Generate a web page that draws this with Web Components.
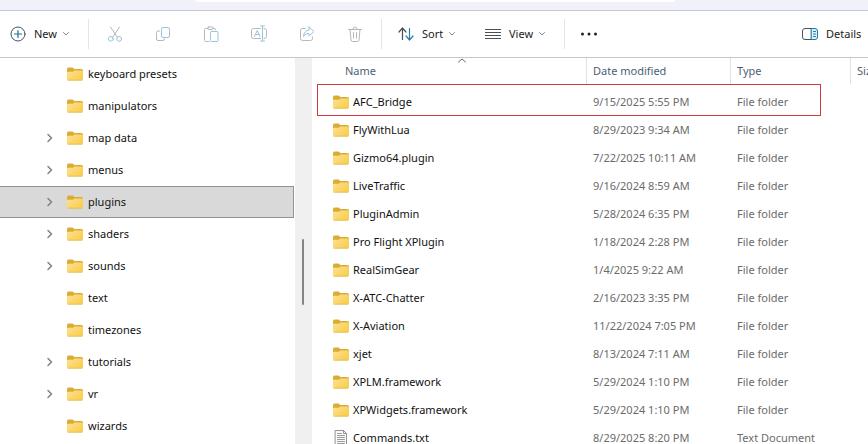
<!DOCTYPE html>
<html lang="en">
<head>
<meta charset="utf-8">
<title>plugins</title>
<style>
html, body { margin: 0; height: 100%; overflow: hidden; }
body { font: 11px/16px "Noto Sans", "Open Sans", sans-serif; color: #1b1b1b; background: #fff; }
</style>
</head>
<body>
<explorer-window>
  <command-bar slot="commands">
    <command-button icon="new" menu style="--w:86px;--pad:10px">New</command-button>
    <bar-divider></bar-divider>
    <command-button icon="cut" label="Cut" disabled></command-button>
    <command-button icon="copy" label="Copy" disabled></command-button>
    <command-button icon="paste" label="Paste" disabled></command-button>
    <command-button icon="rename" label="Rename" disabled></command-button>
    <command-button icon="share" label="Share" disabled></command-button>
    <command-button icon="trash" label="Delete" disabled></command-button>
    <bar-divider></bar-divider>
    <command-button icon="sort" menu style="--w:87px">Sort</command-button>
    <command-button icon="view" menu style="--w:91px">View</command-button>
    <bar-divider></bar-divider>
    <command-button icon="more" label="See more" style="--w:44px"></command-button>
    <command-button slot="end" icon="details" style="--w:80px">Details</command-button>
  </command-bar>
  <folder-tree slot="tree">
    <tree-item>keyboard presets</tree-item>
    <tree-item>manipulators</tree-item>
    <tree-item expandable>map data</tree-item>
    <tree-item expandable>menus</tree-item>
    <tree-item expandable selected>plugins</tree-item>
    <tree-item expandable>shaders</tree-item>
    <tree-item expandable>sounds</tree-item>
    <tree-item>text</tree-item>
    <tree-item>timezones</tree-item>
    <tree-item expandable>tutorials</tree-item>
    <tree-item expandable>vr</tree-item>
    <tree-item>wizards</tree-item>
  </folder-tree>
  <file-list></file-list>
</explorer-window>

<script>
const svg = (w, h, body) =>
  `<svg width="${w}" height="${h}" viewBox="0 0 ${w} ${h}" fill="none" stroke-linecap="round" stroke-linejoin="round" aria-hidden="true">${body}</svg>`;

const ICONS = {
  new: svg(16, 16, `<circle cx="8" cy="8" r="7" stroke="#45525e"/><path d="M8 4.500v7M4.500 8h7" stroke="#1f7196" stroke-width="1.200"/>`),
  cut: svg(16, 16, `<path d="M3.500 1l6.700 10M12.500 1L5.800 11" stroke="#b4b8bb"/><circle cx="3.800" cy="12.800" r="2.400" stroke="#9cc4dc"/><circle cx="12.200" cy="12.800" r="2.400" stroke="#9cc4dc"/>`),
  copy: svg(16, 16, `<path d="M4.500 5H3Q1.500 5 1.500 6.500V13q0 1.500 1.500 1.500h5q1.500 0 1.500-1.500" stroke="#b4b8bb"/><rect x="6.500" y="1.500" width="8" height="10" rx="1.500" stroke="#9cc4dc"/>`),
  paste: svg(16, 16, `<path d="M5 2.500H2.500Q1.500 2.500 1.500 3.500v11q0 1 1 1H6M10 2.500h1.500q1 0 1 1V4" stroke="#b4b8bb"/><rect x="4.500" y="1" width="6" height="2.500" rx="1.200" stroke="#b4b8bb"/><rect x="7.500" y="5.500" width="7.500" height="10" rx="1" stroke="#9cc4dc"/>`),
  rename: svg(18, 18, `<path d="M10.500 3.500H3.500Q1.500 3.500 1.500 5.500v6q0 2 2 2h7M14 3.500q2.500 0 2.500 2v6q0 2-2.500 2" stroke="#b4b8bb"/><path d="M4.500 11.500l2.700-6 2.700 6M5.500 9.500h3.500M10.500 1h4M12.500 1v15M10.500 16h4" stroke="#9cc4dc"/>`),
  share: svg(16, 16, `<path d="M6 2.500H3.500Q1.500 2.500 1.500 4.500v8q0 2 2 2h8q2 0 2-2V11" stroke="#b4b8bb"/><path d="M10 1l5 4.500-5 4.500V7.500Q6.500 7 4.500 10.500 5 4.500 10 4z" stroke="#9cc4dc"/>`),
  trash: svg(16, 16, `<path d="M1.500 3.500h13M5.800 3.300Q6 1 8 1t2.200 2.300M3 3.500l1 10.500q.2 1.500 1.500 1.500h5q1.300 0 1.500-1.500L13 3.500M6.500 6.500v5.500M9.500 6.500v5.500" stroke="#b4b8bb"/>`),
  sort: svg(16, 16, `<path d="M4.500 13.500V2.500M1 6l3.500-4L8 6" stroke="#4a4f54" stroke-width="1.200"/><path d="M11.500 2.500v11M8 10l3.500 4L15 10" stroke="#2b7ca6" stroke-width="1.200"/>`),
  view: svg(16, 16, `<path d="M0 3.500h16M0 6.500h16M0 9.500h16M0 12.500h16" stroke="#4a4f54"/>`),
  more: svg(18, 4, `<g fill="#222"><circle cx="2.500" cy="2" r="1.500"/><circle cx="9" cy="2" r="1.500"/><circle cx="15.500" cy="2" r="1.500"/></g>`),
  details: svg(16, 12, `<path d="M9.500.500H3Q.500.500.500 3v6q0 2.500 2.500 2.500h6.500z" stroke="#45525e"/><path d="M9.500.500H13q2.500 0 2.500 2.500v6q0 2.500-2.500 2.500H9.500z" fill="#d9f0fa" stroke="#1f7aa5"/><path d="M11.500 3.500h2M11.500 6h2M11.500 8.500h2" stroke="#1f7aa5"/>`),
  down: svg(8, 6, `<path d="M1.500 1.500L4 4l2.500-2.500" stroke="#858585"/>`),
  up: svg(8, 5, `<path d="M.500 4L4 1l3.500 3" stroke="#666"/>`),
  right: svg(8, 10, `<path d="M2 1.500L5.500 5 2 8.500" stroke="#808080" stroke-width="1.500"/>`),
  folder: svg(16, 14, `<path d="M0 2Q0 .500 1.500.500H5.500L7.500 2H14.500Q16 2 16 3.500V8H0z" fill="#d9ad35"/><path d="M0 5.500Q0 4.800.800 4.800H5.800L7.500 3.500H15Q16 3.500 16 4.500V12Q16 13.500 14.500 13.500H1.500Q0 13.500 0 12z" fill="url(#g)"/><path d="M1 13.200H15" stroke="#e0ae3c" stroke-width=".600"/><defs><linearGradient id="g" x1="0" y1="3" x2="10" y2="14" gradientUnits="userSpaceOnUse"><stop stop-color="#fce391"/><stop offset="1" stop-color="#f9cf55"/></linearGradient></defs>`),
  file: svg(16, 16, `<path d="M2.500.500h8l3 3v12h-11z" fill="#fbfbfb" stroke="#929292"/><path d="M10.500.500v3h3" stroke="#929292"/><path d="M4.500 3.500h4M4.500 5.500h7M4.500 7.500h7M4.500 9.500h7M4.500 11.500h7M4.500 13.500h7" stroke="#9a9a9a"/>`)
};

class Base extends HTMLElement {
  connectedCallback() {
    if (!this.shadowRoot) {
      this.attachShadow({ mode: "open" }).innerHTML = `<style>:host,*,*::after{box-sizing:border-box}svg{display:block}${this.css()}</style>${this.html()}`;
    }
  }
}

class GlyphIcon extends Base {
  css() { return `:host{display:inline-flex;flex:none}svg{flex:none}`; }
  html() { return ICONS[this.getAttribute("name")]; }
}

class BarDivider extends Base {
  css() { return `:host{display:block;flex:none;width:1px;height:30px;background:#e4e4e4;margin:0 2px}`; }
  html() { return ""; }
}

class CommandButton extends Base {
  css() {
    return `:host{display:block;flex:none;width:var(--w,48px)}
      button{display:flex;align-items:center;justify-content:center;gap:8px;width:100%;height:40px;padding:0;border:0;background:none;color:inherit;font:inherit}
      .labelled{justify-content:flex-start;padding-left:var(--pad,14px)}
      .labelled glyph-icon:last-child:not(:first-child){margin-left:-3px}`;
  }
  html() {
    const label = this.getAttribute("label");
    const menu = this.hasAttribute("menu");
    return `<button type="button" class="${label ? "" : "labelled"}" ${label ? `aria-label="${label}"` : ""} ${menu ? 'aria-haspopup="menu"' : ""} ${this.hasAttribute("disabled") ? "disabled" : ""}>
      <glyph-icon name="${this.getAttribute("icon")}"></glyph-icon>${label ? "" : "<slot></slot>"}${menu ? '<glyph-icon name="down"></glyph-icon>' : ""}</button>`;
  }
}

class CommandBar extends Base {
  css() {
    return `:host{display:flex;align-items:center;justify-content:space-between;height:47px;background:#fff;border-bottom:1px solid #c6c6ca}
      div{display:flex;align-items:center}`;
  }
  html() { return `<div role="toolbar" aria-label="Commands"><slot></slot></div><div><slot name="end"></slot></div>`; }
}

class TreeItem extends Base {
  css() {
    return `:host{display:grid;grid-template-columns:16px 16px 1fr;column-gap:9px;align-items:center;height:32px;padding-left:42px;border:1px solid transparent;border-left:0;color:#111}
      :host([selected]){background:#d9d9d9;border-color:#929292}
      button{display:flex;justify-content:center;width:16px;height:16px;padding:3px 0;border:0;background:none}
      span{margin-left:-4px}`;
  }
  html() {
    return `${this.hasAttribute("expandable") ? '<button type="button" aria-label="Expand"><glyph-icon name="right"></glyph-icon></button>' : "<i></i>"}
      <glyph-icon name="folder"></glyph-icon><span><slot></slot></span>`;
  }
  connectedCallback() { super.connectedCallback(); this.setAttribute("role", "treeitem"); }
}

class FolderTree extends Base {
  css() {
    return `:host{display:flex;height:100%;overflow:hidden}
      .items{flex:1;min-width:0}
      .track{width:16px;margin-left:1px;background:#f0f0f0;display:grid;grid-template-rows:47fr 17fr 36fr;justify-items:center}
      .thumb{grid-row:2;width:2px;background:#858585;border-radius:1px}`;
  }
  html() { return `<div class="items" role="tree" aria-label="Folders"><slot></slot></div><div class="track"><div class="thumb"></div></div>`; }
}

class FileList extends Base {
  css() {
    return `:host{display:block;overflow:hidden;border-left:1px solid #efefef}
      table{border-collapse:separate;border-spacing:0;table-layout:fixed;width:658px}
      th{position:relative;height:26px;padding:0 6px;text-align:left;font-weight:400;color:#4c5f78;border-right:1px solid #dfe2e6}
      th:first-child{padding-left:33px}
      th glyph-icon{position:absolute;top:0;left:50%;margin-left:9px}
      thead::after{content:"";display:block;height:4px}
      td{height:28px;padding:0 6px;color:#6b6b6b;white-space:nowrap}
      td:first-child{padding-left:21px;color:#111}
      .name{display:flex;align-items:center;gap:4px}
      tr{position:relative}
      .marked::after{content:"";position:absolute;left:5px;top:-4px;bottom:0;width:504px;border:1px solid #d2383c}`;
  }
  html() {
    const rows = [
      ["AFC_Bridge", "9/15/2025 5:55 PM"], ["FlyWithLua", "8/29/2023 9:34 AM"],
      ["Gizmo64.plugin", "7/22/2025 10:11 AM"], ["LiveTraffic", "9/16/2024 8:59 AM"],
      ["PluginAdmin", "5/28/2024 6:35 PM"], ["Pro Flight XPlugin", "1/18/2024 2:28 PM"],
      ["RealSimGear", "1/4/2025 9:22 AM"], ["X-ATC-Chatter", "2/16/2023 3:35 PM"],
      ["X-Aviation", "11/22/2024 7:05 PM"], ["xjet", "8/13/2024 7:11 AM"],
      ["XPLM.framework", "5/29/2024 1:10 PM"], ["XPWidgets.framework", "5/29/2024 1:10 PM"],
      ["Commands.txt", "8/29/2025 8:20 PM", "Text Document"]
    ];
    return `<table><colgroup><col style="width:275px"><col style="width:144px"><col style="width:120px"><col></colgroup>
      <thead><tr><th aria-sort="ascending">Name<glyph-icon name="up"></glyph-icon></th><th>Date modified</th><th>Type</th><th>Size</th></tr></thead>
      <tbody>${rows.map(([n, d, t], i) => `<tr class="${i ? "" : "marked"}"><td><div class="name"><glyph-icon name="${t ? "file" : "folder"}"></glyph-icon><span>${n}</span></div></td><td>${d}</td><td>${t || "File folder"}</td><td></td></tr>`).join("")}</tbody></table>`;
  }
}

class ExplorerWindow extends Base {
  css() {
    return `:host{display:grid;grid-template-rows:11px auto 1fr;height:100vh;overflow:hidden}
      .title{display:grid;grid-template-columns:195px 480px;background:#f1f1f9;border-bottom:1px solid #c9c7d6}
      .title i{grid-column:2;height:2px;background:#fff;border-radius:0 0 3px 3px}
      main{display:grid;grid-template-columns:311px 1fr;min-height:0;overflow:hidden}`;
  }
  html() { return `<div class="title"><i></i></div><slot name="commands"></slot><main><slot name="tree"></slot><slot></slot></main>`; }
}

customElements.define("glyph-icon", GlyphIcon);
customElements.define("bar-divider", BarDivider);
customElements.define("command-button", CommandButton);
customElements.define("command-bar", CommandBar);
customElements.define("tree-item", TreeItem);
customElements.define("folder-tree", FolderTree);
customElements.define("file-list", FileList);
customElements.define("explorer-window", ExplorerWindow);
</script>
</body>
</html>
